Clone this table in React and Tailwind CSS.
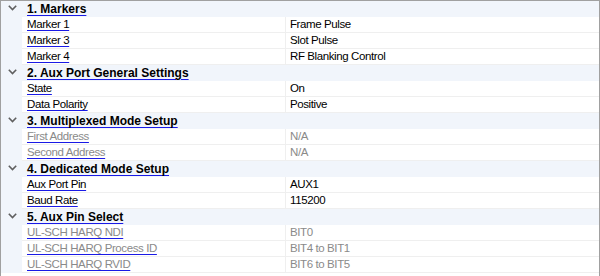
import React from "react";

const sections = [
  {
    title: "1. Markers",
    rows: [
      { name: "Marker 1", value: "Frame Pulse" },
      { name: "Marker 3", value: "Slot Pulse" },
      { name: "Marker 4", value: "RF Blanking Control" },
    ],
  },
  {
    title: "2. Aux Port General Settings",
    rows: [
      { name: "State", value: "On" },
      { name: "Data Polarity", value: "Positive" },
    ],
  },
  {
    title: "3. Multiplexed Mode Setup",
    rows: [
      { name: "First Address", value: "N/A", disabled: true },
      { name: "Second Address", value: "N/A", disabled: true },
    ],
  },
  {
    title: "4. Dedicated Mode Setup",
    rows: [
      { name: "Aux Port Pin", value: "AUX1" },
      { name: "Baud Rate", value: "115200" },
    ],
  },
  {
    title: "5. Aux Pin Select",
    rows: [
      { name: "UL-SCH HARQ NDI", value: "BIT0", disabled: true },
      { name: "UL-SCH HARQ Process ID", value: "BIT4 to BIT1", disabled: true },
      { name: "UL-SCH HARQ RVID", value: "BIT6 to BIT5", disabled: true },
    ],
  },
];

function Chevron() {
  return (
    <svg width="9" height="6" viewBox="0 0 9 6" className="block">
      <path d="M0.8 0.8 L4.5 4.5 L8.2 0.8" fill="none" stroke="#5f5f5f" strokeWidth="1.6" />
    </svg>
  );
}

export default function App() {
  return (
    <div
      className="w-[600px] h-[276px] bg-white border-t border-x border-[#a0a0a0] overflow-hidden"
      style={{ fontFamily: '"Liberation Sans", Arial, sans-serif' }}
    >
      {sections.map((s) => (
        <div key={s.title}>
          <div className="flex h-[16px] bg-[#f1f5fb]">
            <div className="w-[21px] shrink-0 flex items-center justify-center pl-[1px] pb-[2px]">
              <Chevron />
            </div>
            <div className="pl-[5px] text-[12px] leading-[16px] font-bold text-black underline decoration-[#1a1ae6] underline-offset-[2px]">
              {s.title}
            </div>
          </div>
          {s.rows.map((r) => (
            <div key={r.name} className="flex h-[16px]">
              <div className="w-[21px] shrink-0 bg-[#f1f5fb]" />
              <div className="flex flex-1 border-b border-[#efefef]">
                <div
                  className={
                    "w-[264px] shrink-0 border-r border-[#efefef] pl-[5px] text-[11.5px] leading-[15px] tracking-[-0.4px] underline decoration-[#1a1ae6] underline-offset-[2px] " +
                    (r.disabled ? "text-[#8a8a8a]" : "text-black")
                  }
                >
                  {r.name}
                </div>
                <div
                  className={
                    "pl-[4px] text-[11.5px] leading-[15px] tracking-[-0.4px] " +
                    (r.disabled ? "text-[#8a8a8a]" : "text-black")
                  }
                >
                  {r.value}
                </div>
              </div>
            </div>
          ))}
        </div>
      ))}
    </div>
  );
}
